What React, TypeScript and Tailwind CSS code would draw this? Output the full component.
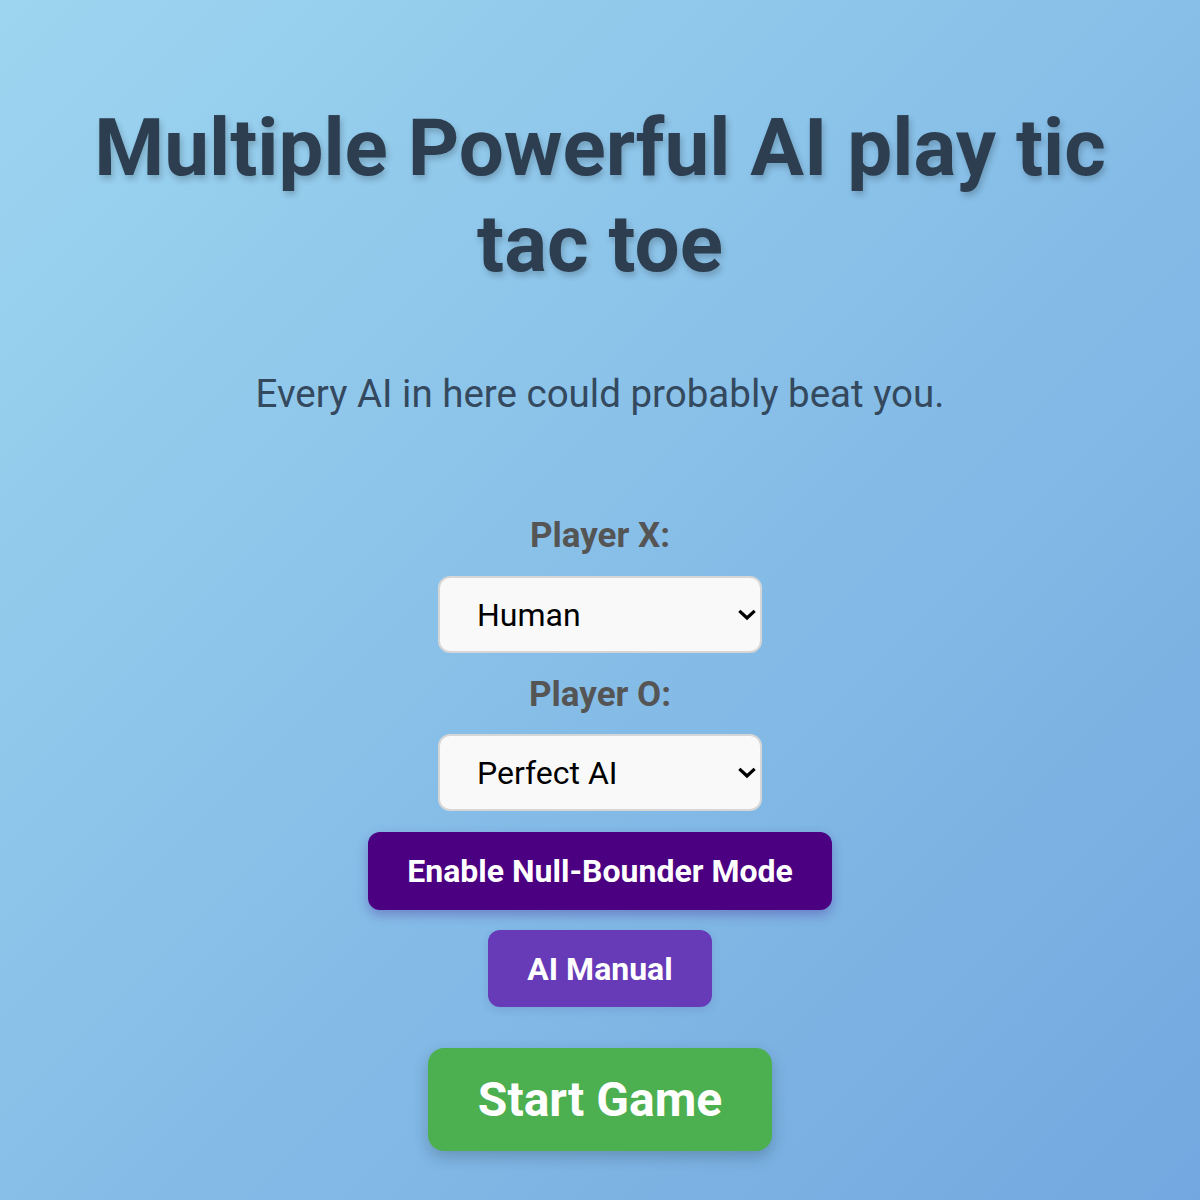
import { useState } from 'react'

function Chevron() {
  return (
    <svg
      className="pointer-events-none absolute right-[6px] top-1/2 -translate-y-1/2"
      width="18"
      height="12"
      viewBox="0 0 18 12"
      fill="none"
    >
      <path d="M2.5 3l6.5 6 6.5-6" stroke="#000" strokeWidth="3.2" strokeLinecap="square" strokeLinejoin="miter" />
    </svg>
  )
}

export default function App() {
  const [playerX, setPlayerX] = useState('human')
  const [playerO, setPlayerO] = useState('perfect')

  return (
    <div className="min-h-[1200px] w-full bg-gradient-to-br from-[#9dd5f0] to-[#72a8df] font-['Roboto',sans-serif]">
      <div className="mx-auto flex max-w-[1120px] flex-col items-center px-5 pt-[100px] text-center">
        <h1 className="text-[80px] font-bold leading-[96px] text-[#2c3e50] [text-shadow:2px_4px_6px_rgba(0,0,0,0.2)]">
          Multiple Powerful AI play tic tac toe
        </h1>
        <p className="mt-[80px] text-[38.5px] leading-[44px] text-[#34495e]">Every AI in here could probably beat you.</p>

        <div className="mt-[100px] flex flex-col items-center">
          <label className="text-[35px] font-bold leading-[40px] text-[#555]">Player X:</label>
          <div className="relative mt-[20px]">
            <select
              value={playerX}
              onChange={(e) => setPlayerX(e.target.value)}
              className="h-[77px] w-[324px] appearance-none rounded-[12px] border-2 border-[#d6d6d6] bg-[#f9f9f9] pl-[37px] pr-[30px] text-[32px] text-black"
            >
              <option value="human">Human</option>
              <option value="random">Random AI</option>
              <option value="perfect">Perfect AI</option>
            </select>
            <Chevron />
          </div>

          <label className="mt-[22px] text-[35px] font-bold leading-[40px] text-[#555]">Player O:</label>
          <div className="relative mt-[19px]">
            <select
              value={playerO}
              onChange={(e) => setPlayerO(e.target.value)}
              className="h-[77px] w-[324px] appearance-none rounded-[12px] border-2 border-[#d6d6d6] bg-[#f9f9f9] pl-[37px] pr-[30px] text-[32px] text-black"
            >
              <option value="human">Human</option>
              <option value="random">Random AI</option>
              <option value="perfect">Perfect AI</option>
            </select>
            <Chevron />
          </div>

          <button className="mt-[21px] h-[78px] w-[464px] rounded-[12px] bg-[#4b0082] text-[32px] font-bold text-white shadow-[0_5px_12px_rgba(60,0,130,0.3)]">
            Enable Null-Bounder Mode
          </button>
          <button className="mt-[20px] h-[77px] w-[224px] rounded-[12px] bg-[#673ab7] text-[32px] font-bold text-white shadow-[0_3px_8px_rgba(60,30,130,0.12)]">
            AI Manual
          </button>
          <button className="mt-[41px] h-[103px] w-[344px] rounded-[16px] bg-[#4caf50] text-[48px] font-bold text-white shadow-[0_6px_16px_rgba(0,0,0,0.2)]">
            Start Game
          </button>
        </div>
      </div>
    </div>
  )
}
